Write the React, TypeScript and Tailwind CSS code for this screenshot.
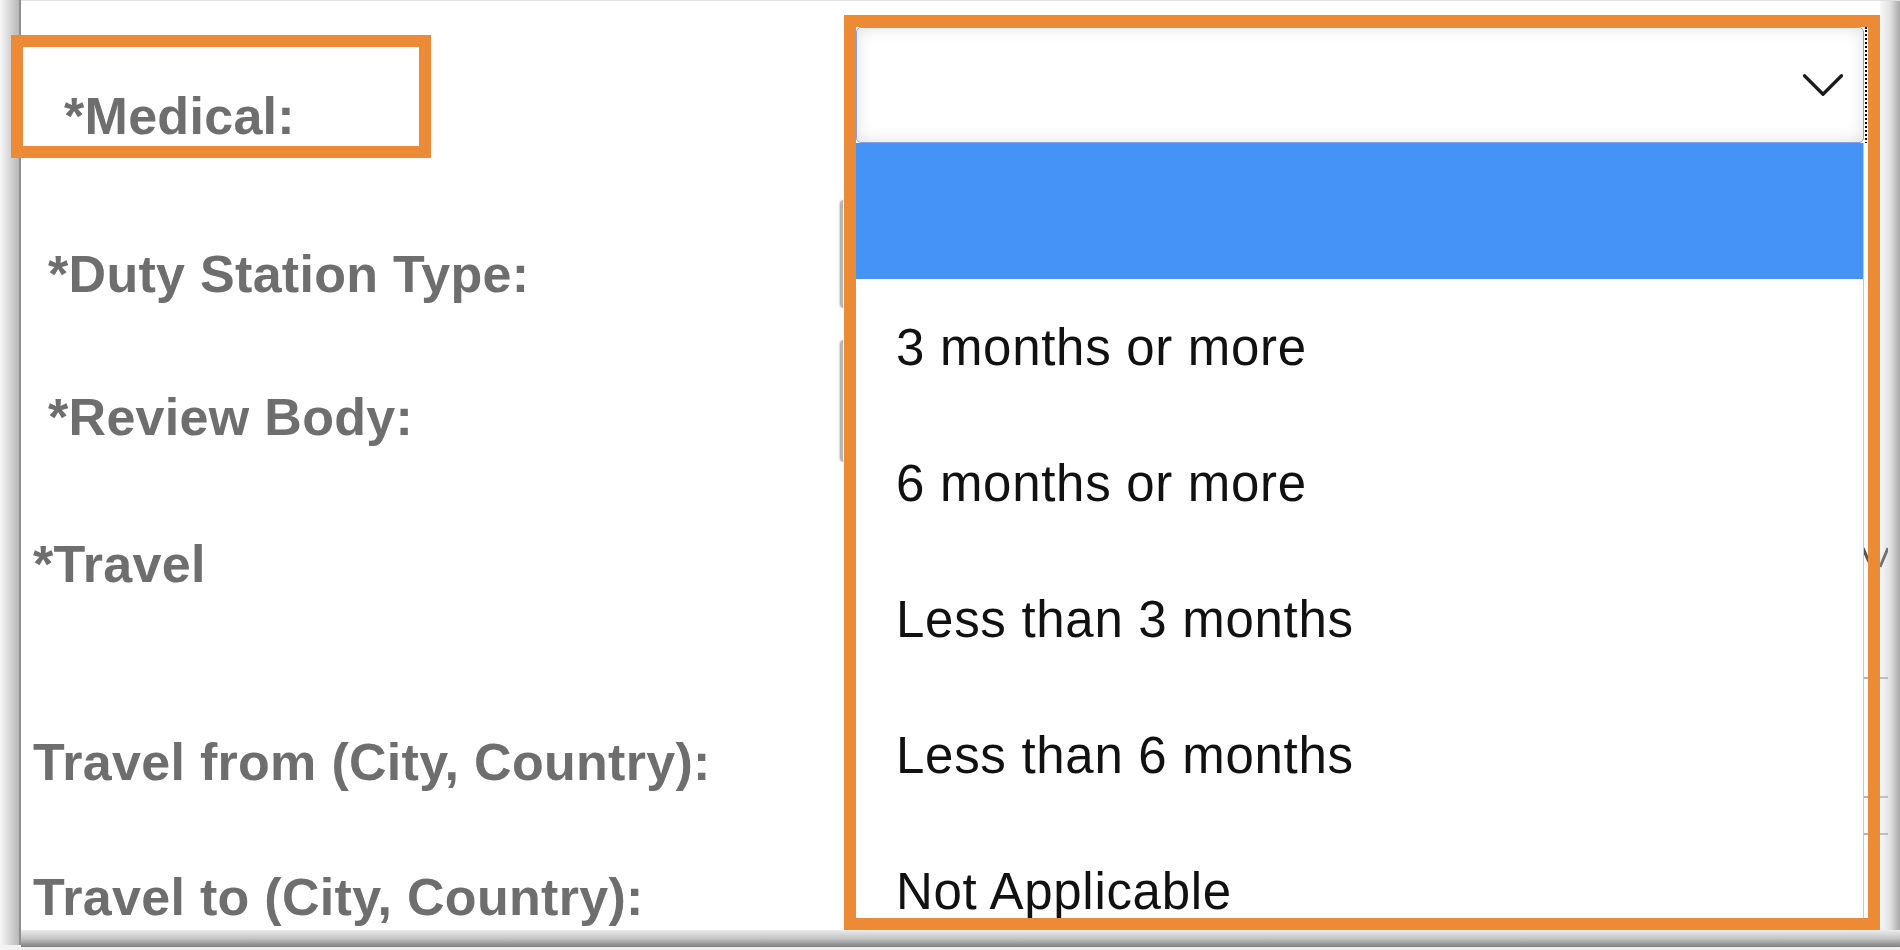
import { ChevronDown } from 'lucide-react';

const LABELS = [
  { text: '*Medical:', mt: 'mt-[89px]', pl: 'pl-[43px]' },
  { text: '*Duty Station Type:', mt: 'mt-[106px]', pl: 'pl-[27px]' },
  { text: '*Review Body:', mt: 'mt-[91px]', pl: 'pl-[27px]' },
  { text: '*Travel', mt: 'mt-[95px]', pl: 'pl-[12px]' },
  { text: 'Travel from (City, Country):', mt: 'mt-[146px]', pl: 'pl-[12px]' },
  { text: 'Travel to (City, Country):', mt: 'mt-[83px]', pl: 'pl-[12px]' },
];

const OPTIONS = ['3 months or more', '6 months or more', 'Less than 3 months', 'Less than 6 months', 'Not Applicable'];

function SelectBox() {
  return (
    <div className="flex h-[116px] shrink-0 items-start">
      <div className="flex h-[116px] flex-1 items-center justify-end rounded-[5px] border border-[#8e9de0] bg-white pr-[3px] shadow-[inset_0_0_16px_rgba(0,0,0,0.13)]">
        <ChevronDown size={74} strokeWidth={1.05} className="text-[#1c1c1c]" />
      </div>
      <div className="ml-px h-[121px] w-[2px] border-l-2 border-dotted border-black" />
      <div className="w-px" />
    </div>
  );
}

// bits of the page behind the list that peek out on its right side
function BehindRight({ offset }: { offset: number }) {
  return (
    <svg width="100%" height="100%" className="block" preserveAspectRatio="none">
      <line x1="-1" y1={548 - offset} x2="5" y2={562 - offset} stroke="#555" strokeWidth="3" />
      <line x1="0" y1={678 - offset} x2="100%" y2={678 - offset} stroke="#b4b4b4" strokeWidth="2" />
      <line x1="0" y1={797 - offset} x2="100%" y2={797 - offset} stroke="#b4b4b4" strokeWidth="2" />
      <line x1="0" y1={834 - offset} x2="100%" y2={834 - offset} stroke="#b4b4b4" strokeWidth="2" />
    </svg>
  );
}

function OptionList() {
  return (
    <div className="flex flex-1 overflow-hidden">
      <div className="flex w-[1008px] flex-col border-r border-[#c9c9c9] bg-white">
        <div className="h-[136px] shrink-0 bg-[#4593f6]" />
        {OPTIONS.map((o) => (
          <div
            key={o}
            className="flex h-[136px] shrink-0 items-center whitespace-nowrap pl-[40px] text-[51px] leading-[51px] tracking-[0.7px] text-[#111]"
          >
            {o}
          </div>
        ))}
      </div>
      <div className="flex-1 bg-white">
        <BehindRight offset={143} />
      </div>
    </div>
  );
}

export default function App() {
  return (
    <div className="relative h-[950px] w-[1900px] overflow-hidden bg-white font-['Liberation_Sans',Arial,sans-serif]">
      <div className="flex h-full">
        {/* left drop shadow of the framed picture */}
        <div className="flex w-[21px] shrink-0 flex-col">
          <div className="h-[945px] border-r-2 border-[#8f8f8f] bg-linear-to-r from-[#f7f7f7] to-[#b8b8b8]" />
          <div className="flex-1 bg-[#f2f2f2]" />
        </div>

        <div className="flex flex-1 flex-col">
          <div className="h-px bg-[#e2e2e2]" />
          <div className="flex h-[929px]">
            <div className="flex w-[819px] flex-col">
              {LABELS.map((l) => (
                <div
                  key={l.text}
                  className={`${l.mt} ${l.pl} whitespace-nowrap text-[52px] font-bold leading-[52px] tracking-[0.3px] text-[#6e6e6e]`}
                >
                  {l.text}
                </div>
              ))}
            </div>

            {/* edges of the fields behind the open list */}
            <div className="flex w-[4px] flex-col">
              <div className="mt-[199px] h-[108px] rounded-l-[6px] border-l-[3px] border-[#b5b5b5] shadow-[-1px_0_2px_rgba(0,0,0,0.15)]" />
              <div className="mt-[32px] h-[122px] rounded-l-[6px] border-l-[3px] border-[#b5b5b5] shadow-[-1px_0_2px_rgba(0,0,0,0.15)]" />
            </div>

            <div className="mt-[14px] flex h-[915px] w-[1036px] flex-col border-[12px] border-[#ec8a35]">
              <SelectBox />
              <OptionList />
            </div>

            {/* right bevel */}
            <div className="relative w-[20px] bg-linear-to-r from-[#f8f8f8] via-[#e2e2e2] to-[#a9a9a9]">
              <div className="h-full w-[8px] opacity-80">
                <svg width="8" height="929" className="block">
                  <line x1="8" y1="547" x2="0" y2="566" stroke="#555" strokeWidth="3" />
                  <line x1="0" y1="677" x2="8" y2="677" stroke="#b4b4b4" strokeWidth="2" />
                  <line x1="0" y1="796" x2="8" y2="796" stroke="#b4b4b4" strokeWidth="2" />
                  <line x1="0" y1="833" x2="8" y2="833" stroke="#b4b4b4" strokeWidth="2" />
                </svg>
              </div>
            </div>
          </div>
          <div className="h-[17px] bg-linear-to-b from-[#ececec] via-[#c4c4c4] to-[#808080]" />
          <div className="flex-1 bg-[#efefef]" />
        </div>
      </div>

      {/* annotation around the Medical label */}
      <div className="absolute left-[11px] top-[35px] h-[123px] w-[420px] border-[12px] border-[#ec8a35]" />
    </div>
  );
}
